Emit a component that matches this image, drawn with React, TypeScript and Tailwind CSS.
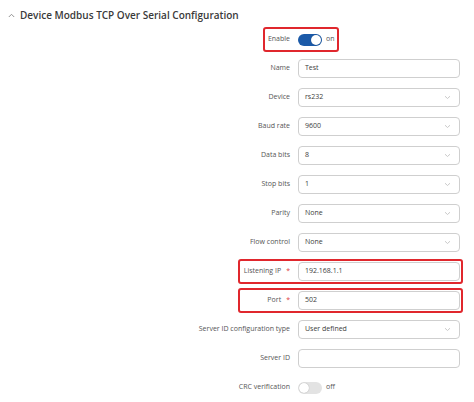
import React from 'react';

type Row =
  | { kind: 'input'; label: string; value: string; required?: boolean; highlight?: boolean }
  | { kind: 'select'; label: string; value: string }
  | { kind: 'switch'; label: string; on: boolean; highlight?: boolean };

const rows: Row[] = [
  { kind: 'switch', label: 'Enable', on: true, highlight: true },
  { kind: 'input', label: 'Name', value: 'Test' },
  { kind: 'select', label: 'Device', value: 'rs232' },
  { kind: 'select', label: 'Baud rate', value: '9600' },
  { kind: 'select', label: 'Data bits', value: '8' },
  { kind: 'select', label: 'Stop bits', value: '1' },
  { kind: 'select', label: 'Parity', value: 'None' },
  { kind: 'select', label: 'Flow control', value: 'None' },
  { kind: 'input', label: 'Listening IP', value: '192.168.1.1', required: true, highlight: true },
  { kind: 'input', label: 'Port', value: '502', required: true, highlight: true },
  { kind: 'select', label: 'Server ID configuration type', value: 'User defined' },
  { kind: 'input', label: 'Server ID', value: '' },
  { kind: 'switch', label: 'CRC verification', on: false },
];

const Chevron = () => (
  <svg width="7" height="5" viewBox="0 0 7 5" className="shrink-0">
    <path d="M1 1.2 L3.5 3.5 L6 1.2" fill="none" stroke="#bdbdbd" strokeWidth="0.8" />
  </svg>
);

const Toggle = ({ on }: { on: boolean }) => (
  <div
    className={`flex items-center w-[24px] h-[12px] rounded-full px-[1px] ${
      on ? 'bg-[#1b5aa8] justify-end' : 'bg-[#e3e3e3] justify-start'
    }`}
  >
    <div className="w-[10px] h-[10px] rounded-full bg-white shadow-[0_0_1px_rgba(0,0,0,0.35)]" />
  </div>
);

const FieldRow = ({ row }: { row: Row }) => {
  return (
    <div className="relative flex items-center h-[29px]">
      <div className="w-[298px] pr-[8px] flex justify-end items-center text-[7px] text-[#555]">
        <span>{row.label}</span>
        {row.kind === 'input' && row.required && (
          <span className="ml-[5px] text-[#e04040]">*</span>
        )}
      </div>
      {row.kind === 'switch' ? (
        <div className="flex items-center gap-[4px]">
          <Toggle on={row.on} />
          <span className="text-[7px] text-[#555]">{row.on ? 'on' : 'off'}</span>
        </div>
      ) : (
        <div className="w-[162px] h-[19px] border border-[#cfcfcf] rounded-[4px] flex items-center justify-between pl-[6px] pr-[8px] text-[7px] text-[#3c3c3c]">
          <span>{row.value}</span>
          {row.kind === 'select' && <Chevron />}
        </div>
      )}
      {row.highlight && row.kind === 'switch' && (
        <div className="absolute left-[263px] w-[76px] top-[2px] h-[25px] border-2 border-[#e0272d] rounded-[3px] pointer-events-none" />
      )}
      {row.highlight && row.kind !== 'switch' && (
        <div className="absolute left-[238px] w-[225px] top-[2px] h-[25px] border-2 border-[#e0272d] rounded-[3px] pointer-events-none" />
      )}
    </div>
  );
};

export default function App() {
  return (
    <div className="w-[474px] h-[402px] bg-white overflow-hidden font-['Open_Sans',sans-serif]">
      <div className="h-[25px] pt-[10px] pl-[8px]">
        <div className="h-[10px] flex items-center gap-[5px]">
          <svg width="7" height="5" viewBox="0 0 7 5">
            <path d="M0.8 4 L3.5 1.3 L6.2 4" fill="none" stroke="#888" strokeWidth="0.9" />
          </svg>
          <h2 className="text-[10px] font-semibold text-[#3a3a3a] leading-none">
            Device Modbus TCP Over Serial Configuration
          </h2>
        </div>
      </div>
      {rows.map((row) => (
        <FieldRow key={row.label} row={row} />
      ))}
    </div>
  );
}
